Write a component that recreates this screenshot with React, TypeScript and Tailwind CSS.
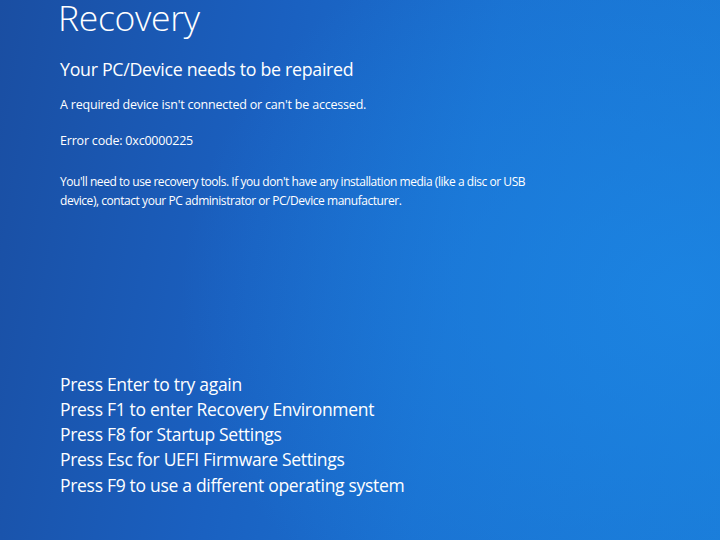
import React from "react";

export default function App() {
  return (
    <div
      className="w-[720px] h-[540px] overflow-hidden text-white bg-[radial-gradient(ellipse_70%_75%_at_95%_55%,rgba(28,134,228,0.8)_0%,rgba(28,134,228,0)_100%),linear-gradient(100deg,#1a4ea2_0%,#1a60c0_35%,#1a70d0_62%,#1a7ad6_100%)]"
      style={{ fontFamily: '"Open Sans", "Noto Sans", sans-serif' }}
    >
      <div className="flex flex-col pl-[58px] h-full">
        <h1 className="text-[35.5px] font-light leading-[34px] tracking-[-0.3px]">Recovery</h1>
        <div className="pl-[2px] flex flex-col">
          <h2 className="text-[17.8px] leading-none mt-[27px] tracking-[-0.3px]">Your PC/Device needs to be repaired</h2>
          <p className="text-[12.5px] leading-none mt-[20px] tracking-[-0.2px]">A required device isn't connected or can't be accessed.</p>
          <p className="text-[12.5px] leading-none mt-[24px] tracking-[-0.2px]">Error code: 0xc0000225</p>
          <p className="text-[12px] leading-[18.5px] mt-[25.5px] tracking-[-0.45px] whitespace-nowrap">
            You'll need to use recovery tools. If you don't have any installation media (like a disc or USB
            <br />
            device), contact your PC administrator or PC/Device manufacturer.
          </p>
          <ul className="mt-[161.5px] flex flex-col text-[17.5px] leading-[25.2px] tracking-[-0.3px]">
            <li>Press Enter to try again</li>
            <li>Press F1 to enter Recovery Environment</li>
            <li>Press F8 for Startup Settings</li>
            <li>Press Esc for UEFI Firmware Settings</li>
            <li>Press F9 to use a different operating system</li>
          </ul>
        </div>
      </div>
    </div>
  );
}
